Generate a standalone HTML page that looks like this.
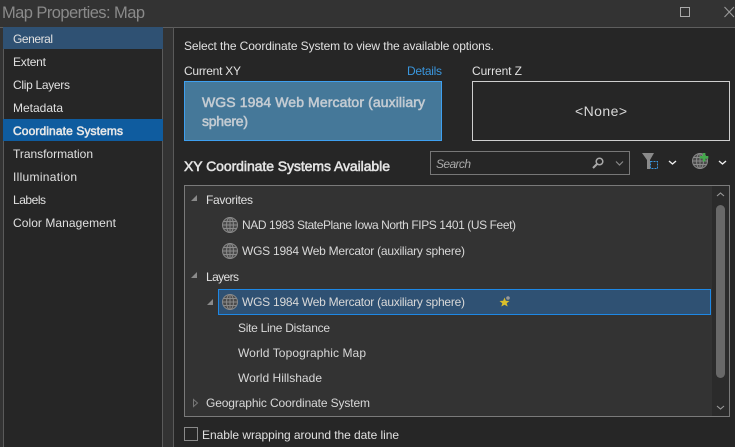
<!DOCTYPE html>
<html><head><meta charset="utf-8"><title>Map Properties: Map</title>
<style>
html,body{margin:0;padding:0;background:#333;width:735px;height:447px;overflow:hidden}
svg{display:block}
text{font-family:"Liberation Sans",sans-serif;font-size:12px;fill:#e0e0e0}
.b{stroke-width:.55px;paint-order:stroke}
</style></head><body>
<svg width="735" height="447" viewBox="0 0 735 447" xmlns="http://www.w3.org/2000/svg">
<defs>
<g id="globe" fill="none" stroke="#8a8a8a" stroke-width="1">
<circle cx="0" cy="0" r="7.500" fill="#4a4a4a"/>
<ellipse cx="0" cy="0" rx="3.500" ry="7.500"/>
<path d="M0-7.500V7.500M-7.500 0H7.500M-6.500-3.500H6.500M-6.500 3.500H6.500"/>
</g>
</defs>
<rect width="735" height="447" fill="#333"/>
<text x="2" y="18" style="font-size:16.500px;fill:#8a8a8a" textLength="143" lengthAdjust="spacing">Map Properties: Map</text>
<rect x="680.500" y="7.500" width="9" height="9" fill="none" stroke="#aaa" stroke-width="1"/>
<path d="M724.500 7L734 17M734 7L724.500 17" stroke="#999" stroke-width="1.100" fill="none"/>
<rect x="0" y="27" width="735" height="1" fill="#5e5e5e"/>

<!-- left list -->
<rect x="3" y="27" width="160" height="420" fill="#262626"/>
<rect x="3" y="27" width="1" height="420" fill="#5a5a5a"/>
<rect x="162" y="27" width="1" height="420" fill="#5a5a5a"/>
<rect x="3" y="27" width="160" height="22" fill="#2f5173"/>
<rect x="3" y="119" width="160" height="22" fill="#0f5c9f"/>
<text x="13" y="43" textLength="40" lengthAdjust="spacing">General</text>
<text x="13" y="66" textLength="33" lengthAdjust="spacing">Extent</text>
<text x="13" y="89" textLength="57" lengthAdjust="spacing">Clip Layers</text>
<text x="13" y="112" textLength="50" lengthAdjust="spacing">Metadata</text>
<text x="13" y="135" class="b" textLength="110" lengthAdjust="spacing" style="fill:#e8e8e8;stroke:#e8e8e8">Coordinate Systems</text>
<text x="13" y="158" textLength="80" lengthAdjust="spacing">Transformation</text>
<text x="13" y="181" textLength="64" lengthAdjust="spacing">Illumination</text>
<text x="13" y="204" textLength="33" lengthAdjust="spacing">Labels</text>
<text x="13" y="227" textLength="103" lengthAdjust="spacing">Color Management</text>

<!-- right panel -->
<rect x="173" y="27" width="562" height="420" fill="#262626"/>
<rect x="173" y="27" width="562" height="1" fill="#5e5e5e"/>
<rect x="173" y="27" width="1" height="420" fill="#5a5a5a"/>
<text x="184" y="50" textLength="310" lengthAdjust="spacing">Select the Coordinate System to view the available options.</text>
<text x="184" y="75" textLength="57" lengthAdjust="spacing">Current XY</text>
<text x="407" y="75" textLength="35" lengthAdjust="spacing" style="fill:#3a96dd">Details</text>
<text x="472" y="75" textLength="50" lengthAdjust="spacing">Current Z</text>
<rect x="184.500" y="81.500" width="257" height="59" fill="#457899" stroke="#3ea0f0"/>
<text x="202" y="107" class="b" textLength="223" lengthAdjust="spacing" style="font-size:14px;fill:#c3cbd2;stroke:#c3cbd2">WGS 1984 Web Mercator (auxiliary</text>
<text x="202" y="126" class="b" textLength="46" lengthAdjust="spacing" style="font-size:14px;fill:#c3cbd2;stroke:#c3cbd2">sphere)</text>
<rect x="472.500" y="81.500" width="257" height="59" fill="#262626" stroke="#cfcfcf"/>
<text x="575" y="116" textLength="52" lengthAdjust="spacing" style="font-size:14px;fill:#d8d8d8">&lt;None&gt;</text>

<text x="184" y="171" class="b" textLength="206" lengthAdjust="spacing" style="font-size:14px;fill:#e4e4e4;stroke:#e4e4e4">XY Coordinate Systems Available</text>

<!-- search -->
<rect x="430.500" y="151.500" width="199" height="23" fill="#262626" stroke="#777"/>
<text x="436" y="168" textLength="35" lengthAdjust="spacing" style="font-style:italic;fill:#a8a8a8">Search</text>
<circle cx="599.500" cy="161.500" r="3.300" fill="none" stroke="#a8a8a8" stroke-width="1.500"/>
<path d="M597 164L593 168" stroke="#a8a8a8" stroke-width="2" fill="none"/>
<path d="M616 161.500L619.500 165L623 161.500" stroke="#888" stroke-width="1.200" fill="none"/>
<!-- filter -->
<path d="M642 153H654L650 160V169H647V160Z" fill="#8a8a8a"/>
<rect x="650.500" y="161.500" width="7" height="7" fill="#262626" stroke="#3a96dd" stroke-dasharray="2 1"/>
<path d="M669 161L672.500 164L676 161" stroke="#eee" stroke-width="1.400" fill="none"/>
<!-- add globe -->
<use href="#globe" x="700" y="161"/>
<rect x="702.800" y="153" width="2.600" height="8.500" fill="#44aa4c"/>
<rect x="699.800" y="156" width="8.500" height="2.600" fill="#44aa4c"/>
<path d="M719 161L722.500 164L726 161" stroke="#eee" stroke-width="1.400" fill="none"/>

<!-- tree -->
<rect x="184.500" y="185.500" width="545" height="231" fill="#333" stroke="#7a7a7a"/>
<rect x="712" y="186" width="17" height="230" fill="#2b2b2b"/>
<path d="M717 196L720.500 193L724 196" stroke="#999" stroke-width="1.100" fill="none"/>
<rect x="716" y="205" width="9" height="173" rx="4.500" fill="#686868"/>
<path d="M717 406L720.500 409L724 406" stroke="#999" stroke-width="1.100" fill="none"/>

<path d="M191 201L197 201L197 195Z" fill="#8a8a8a"/>
<text x="206" y="204" textLength="47" lengthAdjust="spacing">Favorites</text>
<use href="#globe" x="230" y="225"/>
<text x="242" y="229" textLength="274" lengthAdjust="spacing" style="fill:#d8d8d8">NAD 1983 StatePlane Iowa North FIPS 1401 (US Feet)</text>
<use href="#globe" x="230" y="251"/>
<text x="242" y="255" textLength="223" lengthAdjust="spacing" style="fill:#d8d8d8">WGS 1984 Web Mercator (auxiliary sphere)</text>
<path d="M191 278L197 278L197 272Z" fill="#8a8a8a"/>
<text x="206" y="281" textLength="33" lengthAdjust="spacing">Layers</text>

<rect x="218.500" y="289.500" width="492" height="25" fill="#2f5173" stroke="#1e88e5"/>
<path d="M207 305L213 305L213 299Z" fill="#8a8a8a"/>
<use href="#globe" x="230" y="302"/>
<text x="242" y="306" textLength="223" lengthAdjust="spacing" style="fill:#d8d8d8">WGS 1984 Web Mercator (auxiliary sphere)</text>
<path d="M504.500 297.500L505.800 300.800L509.500 301L506.700 303.200L507.700 306.500L504.500 304.700L501.300 306.500L502.300 303.200L499.500 301L503.200 300.800Z" fill="#d9bf2b"/>
<circle cx="508" cy="298" r="1.800" fill="#999"/>

<text x="238" y="332" textLength="92" lengthAdjust="spacing" style="fill:#d8d8d8">Site Line Distance</text>
<text x="238" y="357" textLength="128" lengthAdjust="spacing" style="fill:#d8d8d8">World Topographic Map</text>
<text x="238" y="382" textLength="84" lengthAdjust="spacing" style="fill:#d8d8d8">World Hillshade</text>
<path d="M193.500 399.500L197.500 403L193.500 406.500Z" fill="none" stroke="#777"/>
<text x="206" y="407" textLength="164" lengthAdjust="spacing" style="fill:#d8d8d8">Geographic Coordinate System</text>

<rect x="184.500" y="427.500" width="13" height="13" fill="#262626" stroke="#8a8a8a"/>
<text x="202" y="439" textLength="197" lengthAdjust="spacing">Enable wrapping around the date line</text>
</svg>
</body></html>
